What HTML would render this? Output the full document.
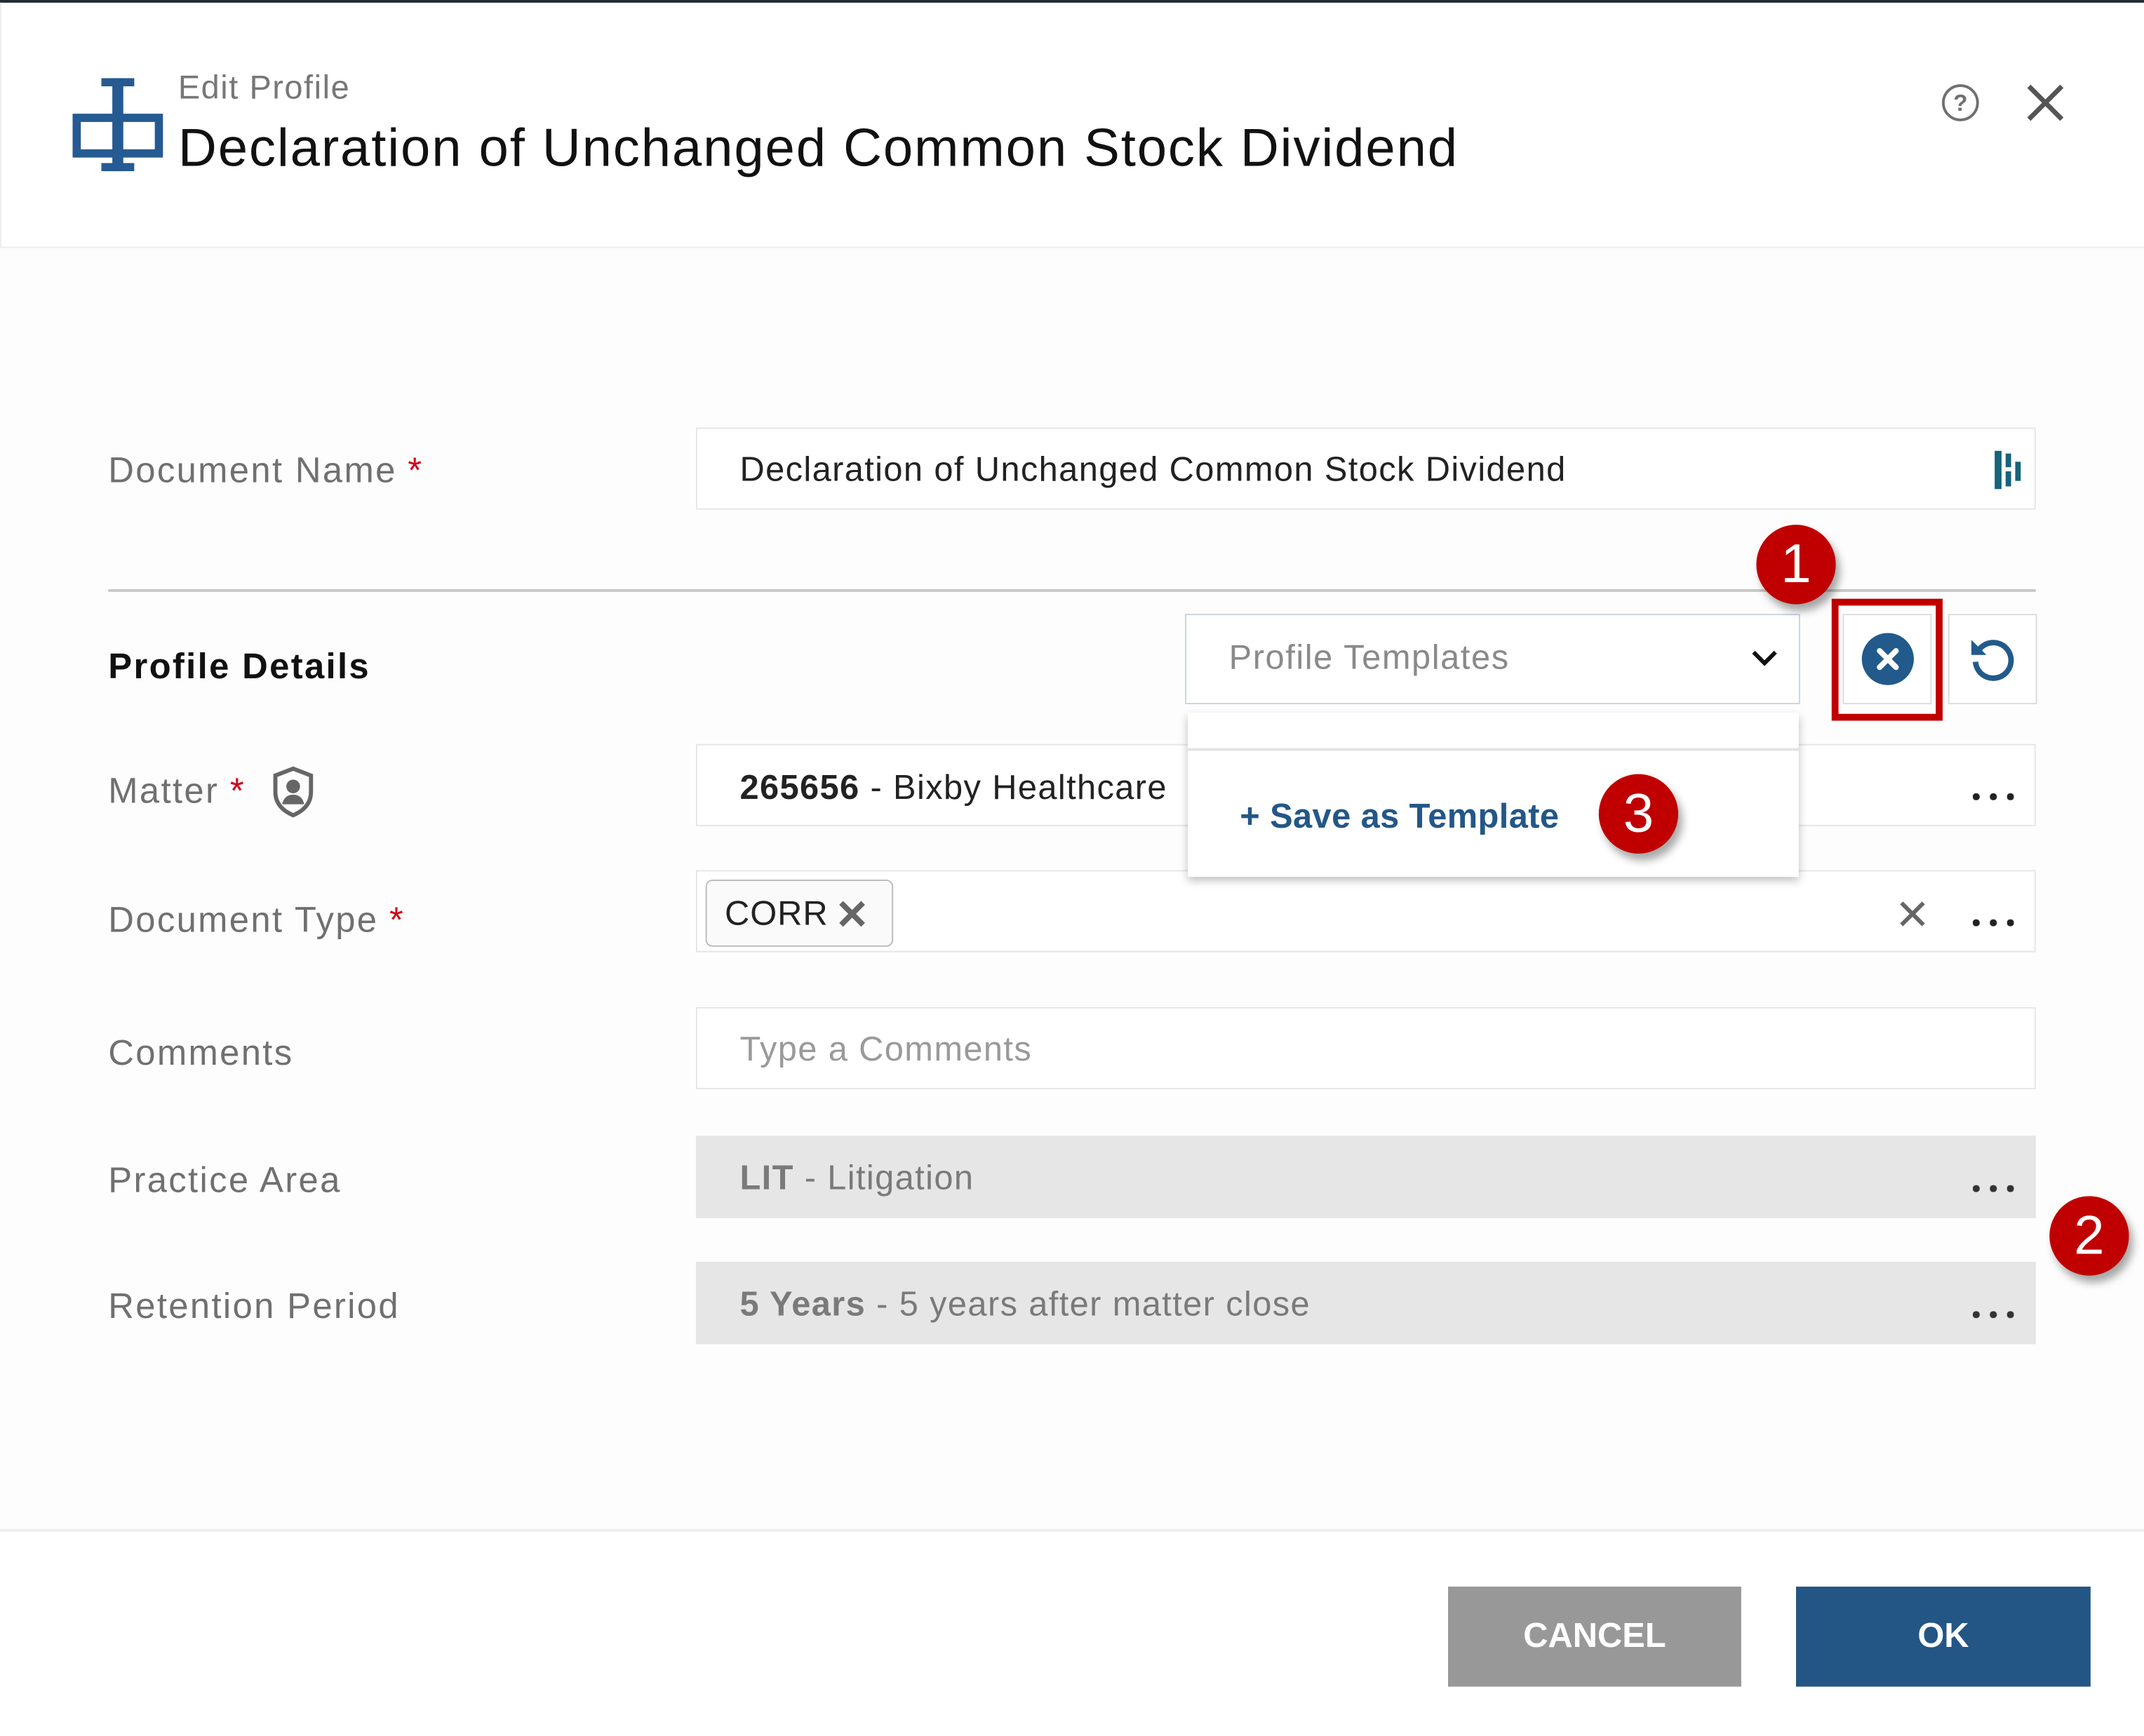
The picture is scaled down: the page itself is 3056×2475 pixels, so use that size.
<!DOCTYPE html>
<html><head><meta charset="utf-8">
<style>
html,body{margin:0;padding:0;background:#fff;}
body{width:3056px;height:2475px;overflow:hidden;position:relative;}
#s{position:absolute;left:0;top:0;width:1565px;height:1267px;transform:scale(1.95272,1.9534);transform-origin:0 0;font-family:"Liberation Sans",sans-serif;background:#fdfdfd;}
.a{position:absolute;}
.lbl{position:absolute;left:79px;font-size:26px;color:#707070;line-height:30px;letter-spacing:1.2px;}
.req{color:#d0021b;margin-left:8px;}
.box{position:absolute;left:508px;width:978px;height:60px;border:1px solid #e6e6e6;background:#fff;box-sizing:border-box;}
.txt{position:absolute;left:31px;top:15px;font-size:25px;line-height:30px;color:#222;white-space:nowrap;letter-spacing:0.7px;}
.dots{position:absolute;right:15px;top:35px;width:30px;height:5px;background:radial-gradient(circle at 2.5px 2.5px,#222 2.4px,transparent 2.8px) 0 0/12.5px 5px repeat-x;}
.dis .dots{background-image:radial-gradient(circle at 2.5px 2.5px,#333 2.4px,transparent 2.8px);}
.dis{background:#e6e6e6;border-color:#e6e6e6;}
.badge{position:absolute;width:58px;height:58px;border-radius:50%;background:#c00000;color:#fff;font-size:40px;line-height:58px;text-align:center;box-shadow:3px 5px 6px rgba(0,0,0,.35);}
</style></head><body><div id="s">
<div class="a" style="left:0;top:0;width:1565px;height:2px;background:#1f2a33"></div>
<div class="a" style="left:0;top:2px;width:1565px;height:178px;background:#fff;border-bottom:1px solid #ececec;border-left:1px solid #eee;"></div>
<svg class="a" style="left:53px;top:57px" width="66" height="68" viewBox="0 0 66 68"><g fill="#255a92"><rect x="21" y="0" width="24" height="6"/><rect x="21" y="62" width="24" height="6"/><rect x="29" y="0" width="8" height="68"/><path d="M0 26h66v32H0z M6 32v20h54V32z" fill-rule="evenodd"/></g></svg>
<div class="a" style="left:130px;top:51px;font-size:24px;color:#777;letter-spacing:0.8px">Edit Profile</div>
<div class="a" style="left:130px;top:87px;font-size:39px;color:#111;white-space:nowrap;letter-spacing:0.95px">Declaration of Unchanged Common Stock Dividend</div>
<svg class="a" style="left:1417px;top:61px" width="28" height="28" viewBox="0 0 28 28"><circle cx="14" cy="14" r="12.5" fill="none" stroke="#707070" stroke-width="2"/><text x="14" y="20" font-size="17" font-weight="bold" text-anchor="middle" fill="#707070" font-family="Liberation Sans">?</text></svg>
<svg class="a" style="left:1479px;top:61px" width="28" height="28" viewBox="0 0 28 28"><path d="M2 2L26 26M26 2L2 26" stroke="#555" stroke-width="3.5"/></svg>

<div class="lbl" style="top:328px">Document Name<span class="req">*</span></div>
<div class="box" style="top:312px"><div class="txt">Declaration of Unchanged Common Stock Dividend</div>
<svg class="a" style="left:945px;top:16px" width="24" height="28" viewBox="0 0 24 28"><g fill="#17637a"><rect x="2" y="0" width="5" height="28"/><rect x="10" y="2" width="4" height="10"/><rect x="10" y="15" width="4" height="11"/><rect x="17" y="8" width="4" height="14"/></g></svg></div>

<div class="a" style="left:79px;top:430px;width:1407px;height:2px;background:#c8c8c8"></div>
<div class="a" style="left:79px;top:471px;font-size:26px;font-weight:bold;color:#111;letter-spacing:1.2px">Profile Details</div>

<div class="a" style="left:865px;top:448px;width:449px;height:66px;border:1px solid #c9d4e2;background:#fff;box-sizing:border-box;">
<div class="a" style="left:31px;top:17px;font-size:25px;color:#8a8a8a;letter-spacing:0.8px">Profile Templates</div>
<svg class="a" style="left:412px;top:25px" width="20" height="14" viewBox="0 0 20 14"><path d="M2 2l8 8 8-8" fill="none" stroke="#111" stroke-width="3"/></svg></div>
<div class="a" style="left:1345px;top:448px;width:65px;height:66px;border:1px solid #ddd;background:#fff;box-sizing:border-box"></div>
<svg class="a" style="left:1358px;top:461px" width="40" height="40" viewBox="0 0 40 40"><circle cx="20" cy="20" r="19" fill="#225a8c"/><path d="M14 14l12 12M26 14L14 26" stroke="#fff" stroke-width="4" stroke-linecap="round"/></svg>
<div class="a" style="left:1337px;top:437px;width:81px;height:89px;border:5px solid #c00000;box-sizing:border-box"></div>
<div class="a" style="left:1422px;top:448px;width:65px;height:66px;border:1px solid #ddd;background:#fff;box-sizing:border-box"></div>
<svg class="a" style="left:1436px;top:463px" width="36" height="36" viewBox="0 0 36 36"><path d="M8 12A13 13 0 1 1 6 20" fill="none" stroke="#225a8c" stroke-width="4"/><path d="M3 4v11h11z" fill="#225a8c"/></svg>
<div class="badge" style="left:1282px;top:383px">1</div>

<div class="lbl" style="top:562px">Matter<span class="req">*</span></div>
<svg class="a" style="left:198px;top:559px" width="32" height="38" viewBox="0 0 32 38"><path d="M16 2L3 7v12c0 9 6 14 13 17 7-3 13-8 13-17V7z" fill="none" stroke="#666" stroke-width="3"/><circle cx="16" cy="15" r="5" fill="#666"/><path d="M8 28c1-5 4-7 8-7s7 2 8 7z" fill="#666"/></svg>
<div class="box" style="top:543px"><div class="txt" style="top:16px"><b>265656</b> - Bixby Healthcare</div><div class="dots"></div></div>

<div class="lbl" style="top:656px">Document Type<span class="req">*</span></div>
<div class="box" style="top:635px"><div class="a" style="left:6px;top:6px;width:137px;height:49px;border:1px solid #bbb;border-radius:5px;background:#fafafa;box-sizing:border-box"><div class="a" style="left:13px;top:10px;font-size:25px;color:#222;letter-spacing:0.5px">CORR</div><svg class="a" style="left:96px;top:14px" width="20" height="20" viewBox="0 0 20 20"><path d="M2 2l16 16M18 2L2 18" stroke="#666" stroke-width="4"/></svg></div>
<svg class="a" style="left:877px;top:21px" width="20" height="20" viewBox="0 0 20 20"><path d="M2 2l16 16M18 2L2 18" stroke="#666" stroke-width="3"/></svg><div class="dots"></div></div>

<div class="a" style="left:867px;top:520px;width:446px;height:120px;background:#fff;box-shadow:0 3px 6px rgba(0,0,0,.25);">
<div class="a" style="left:0;top:26px;width:446px;height:2px;background:#e2e2e2"></div>
<div class="a" style="left:38px;top:62px;font-size:25px;font-weight:bold;color:#245787;white-space:nowrap;letter-spacing:0.2px">+ Save as Template</div></div>
<div class="badge" style="left:1167px;top:565px">3</div>

<div class="lbl" style="top:753px">Comments</div>
<div class="box" style="top:735px"><div class="txt" style="color:#9a9a9a">Type a Comments</div></div>

<div class="lbl" style="top:846px">Practice Area</div>
<div class="box dis" style="top:829px"><div class="txt" style="color:#7a7a7a"><b>LIT</b> - Litigation</div><div class="dots"></div></div>

<div class="lbl" style="top:938px">Retention Period</div>
<div class="box dis" style="top:921px"><div class="txt" style="color:#7a7a7a"><b>5 Years</b> - 5 years after matter close</div><div class="dots"></div></div>
<div class="badge" style="left:1496px;top:873px">2</div>

<div class="a" style="left:0;top:1116px;width:1565px;height:2px;background:#eee"></div>
<div class="a" style="left:0;top:1118px;width:1565px;height:149px;background:#fff"></div>
<div class="a" style="left:1057px;top:1158px;width:214px;height:73px;background:#989898;color:#fff;font-size:25px;font-weight:bold;text-align:center;line-height:73px">CANCEL</div>
<div class="a" style="left:1311px;top:1158px;width:215px;height:73px;background:#235684;color:#fff;font-size:25px;font-weight:bold;text-align:center;line-height:73px">OK</div>
</div></body></html>
